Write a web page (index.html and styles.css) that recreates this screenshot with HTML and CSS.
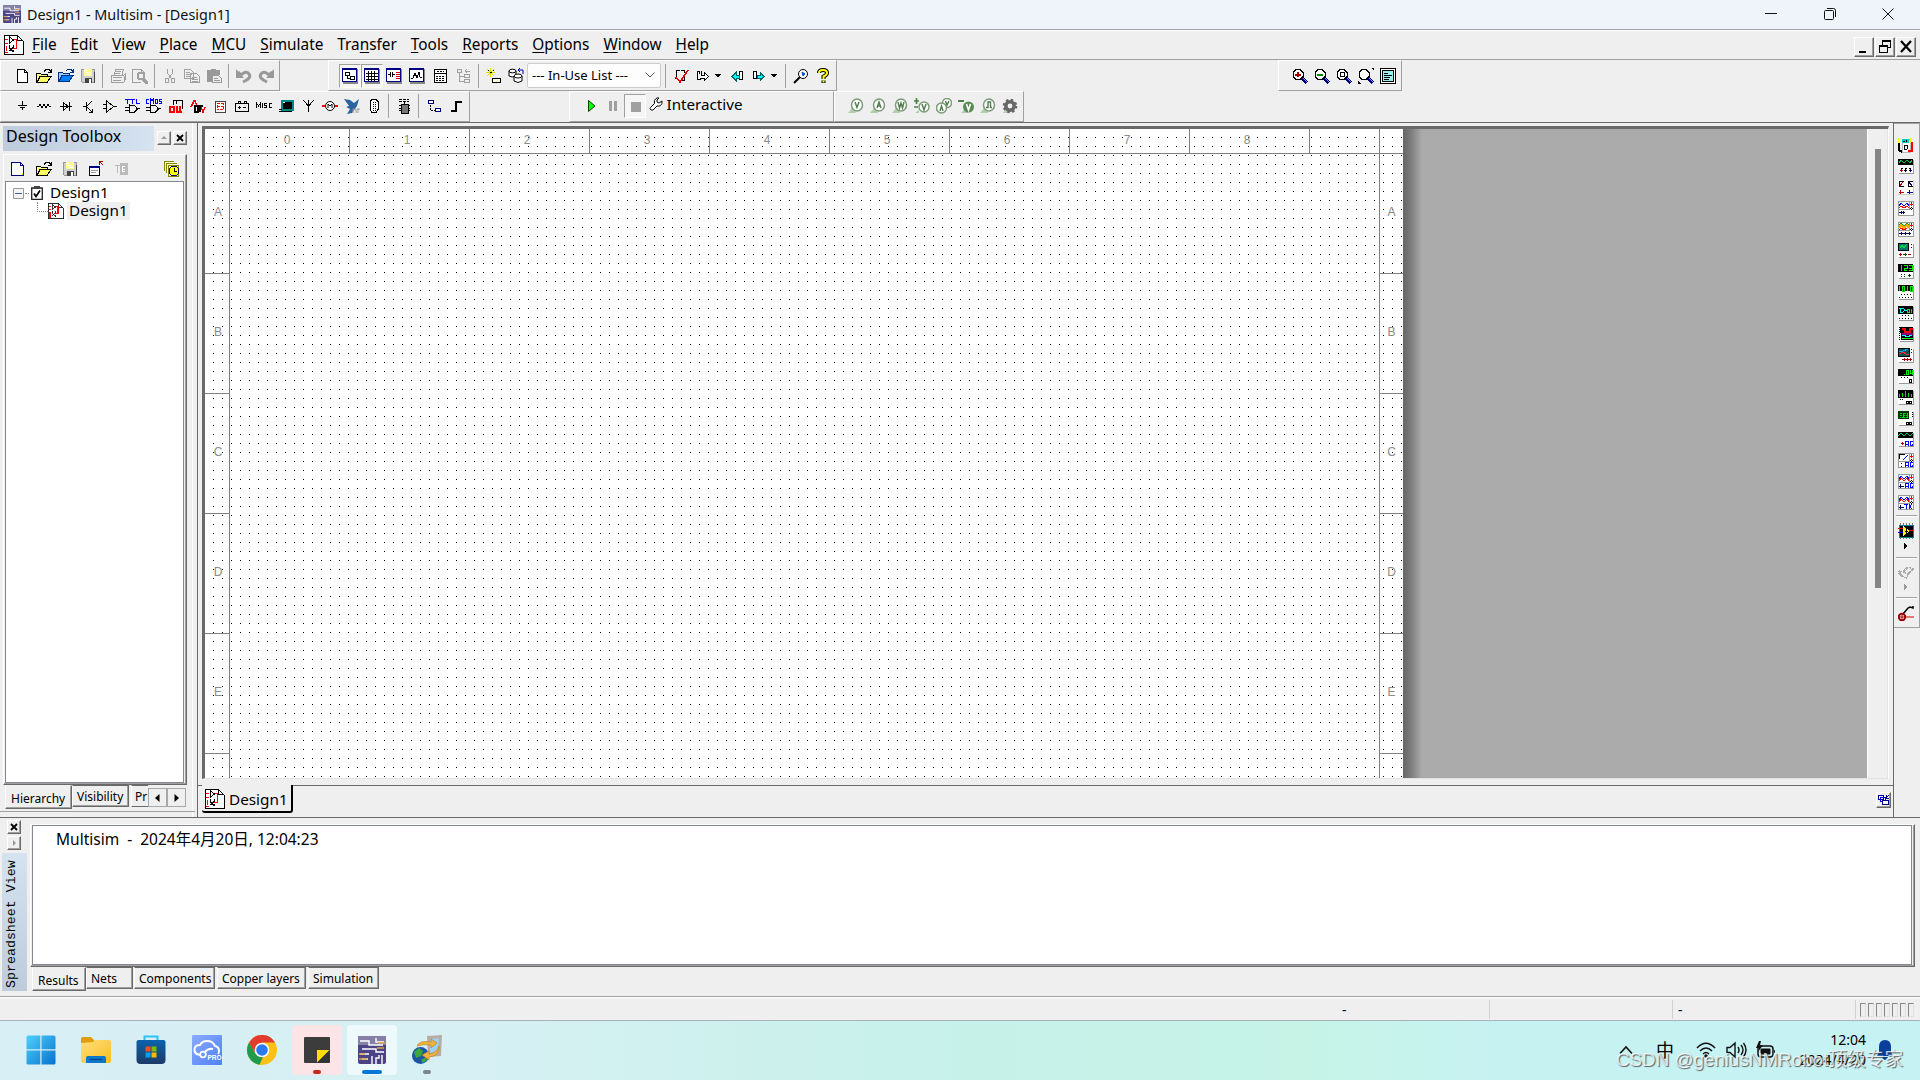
FILE: index.html
```html
<!DOCTYPE html>
<html lang="en">
<head>
  <meta charset="UTF-8" />
  <meta name="viewport" content="width=device-width, initial-scale=1.0"/>
  <title>Design1 - Multisim - [Design1]</title>
  <link rel="stylesheet" href="styles.css">
</head>
<body>

<!-- shared icons -->
<svg class="sprite">
  <symbol id="app" viewBox="0 0 28 28">
    <rect width="28" height="28" rx="2" fill="#4c4384"/>
    <rect y="0" width="28" height="9" fill="#8580a8"/>
    <path d="M2 5h9v4h8M18 2v4h8M4 13h14v3h8M18 9h7M2 18h9M4 23h6M14 28v-8M18 28v-6h3v-3M24 28v-9" fill="none" stroke="#fff" stroke-width="1.4"/>
    <path d="M20 7h7M19 12h7M1 18h6M1 23h8" stroke="#d8a44a" stroke-width="1.6"/>
  </symbol>
  <symbol id="schem" viewBox="0 0 20 20">
    <path d="M.5.5h13l6 6v13H.5z" fill="#fff" stroke="#000"/>
    <path d="M13.500.5v5h5" fill="none" stroke="#000"/>
    <path d="M1 4.500h3M1 8.500h3M2.500 11v5M1 17.500h3M10 4.500h2.500v9H9" fill="none" stroke="#f00" stroke-width="1.300"/>
    <path d="M5.500 2v6l4-3zM5.500 10v3l4 4M9.500 10v2l-4 4M9 15v2" fill="none" stroke="#000"/>
  </symbol>
  <symbol id="new" viewBox="0 0 16 16">
    <path d="M3.500 1.500h7l3 3v10h-10z" fill="#fff" stroke="#000"/>
    <path d="M10.500 1.500v3h3" fill="none" stroke="#000"/>
  </symbol>
  <symbol id="new2" viewBox="0 0 16 16">
    <path d="M2 2h9l3 3v10H2z" fill="#fff"/><path d="M9 15l5-5v5z" fill="#ff0"/>
    <path d="M1.500 1.500h9l3 3v10h-12zM10.500 1.500v3h3" fill="none" stroke="#000080"/>
  </symbol>
  <symbol id="open" viewBox="0 0 16 16">
    <path d="M.5 14V5.500h4l1 1h6V9" fill="#ffff80" stroke="#000"/>
    <path d="M1 14.500l3-6h11l-4 6z" fill="#ffff60" stroke="#000"/>
    <path d="M8 3.500l2-2h3l2 2M15.500 1v4M12 4.500h3" fill="none" stroke="#000"/>
  </symbol>
  <symbol id="openb" viewBox="0 0 16 16">
    <path d="M.5 13V4.500h4l1 1h6V8" fill="#9cf" stroke="#003080"/>
    <path d="M1 13.500l3-6h11l-4 6z" fill="#0080ff" stroke="#003080"/>
    <path d="M8 2.500l2-1h3l2 2M15.500 1v4M12 4.500h3" fill="none" stroke="#003080"/>
  </symbol>
  <symbol id="save" viewBox="0 0 16 16">
    <path d="M1.500 1.500h13v13h-12l-1-1z" fill="#d0d0d0" stroke="#999"/>
    <path d="M4 1h8v7H4z" fill="#ffff90"/><path d="M4 2.500h3M6 4.500h3M8 6.500h3" stroke="#fff"/>
    <path d="M5 10h7v5H5z" fill="#444"/><path d="M9 11h2v4H9z" fill="#fff"/><path d="M14.500 4v11" stroke="#444"/>
  </symbol>
  <symbol id="box" viewBox="0 0 16 16">
    <path d="M1 1h15v15H1z" fill="#888"/><path d="M.5.5h14v13H.5z" fill="#fff" stroke="#000080"/><path d="M0 0h15v2H0z" fill="#000080"/>
  </symbol>
  <symbol id="arrow-down" viewBox="0 0 7 4"><path d="M0 0h7L3.500 4z" fill="#000"/></symbol>
  <symbol id="lens" viewBox="0 0 16 16">
    <path d="M10 10l5 5" stroke="#000080" stroke-width="3"/><path d="M11 10l4 4" stroke="#88f"/>
    <path d="M4 1.500h4l3 3v4l-3 3H4l-3-3v-4z" fill="#fff" stroke="#000"/>
  </symbol>
  <symbol id="probe" viewBox="0 0 16 16">
    <path d="M0 15l5-6 3 6z" fill="#b2cfac"/><ellipse cx="9" cy="7" rx="5.500" ry="6" fill="#fff" stroke="#7d9b78" stroke-width="1.500"/>
  </symbol>
  <!-- instrument case: screen on top, terminals below -->
  <symbol id="inst" viewBox="0 0 16 16">
    <path d="M1 1h15v14H1z" fill="#999"/><path d="M0 0h15v14H0z" fill="#fff"/><path d="M0 0h15v6H0z" fill="#000"/>
  </symbol>
  <symbol id="inst2" viewBox="0 0 16 16">
    <path d="M0 0h16v15H0z" fill="#999"/><path d="M1 1h10v7H1zM12 1h3v13h-3zM1 9h14v5H1z" fill="#fff"/>
    <path d="M13.500 1v4M12 3h3" stroke="#f00"/><path d="M13 6h1v1h-1zM12 7h1v1h-1zM14 7h1v1h-1zM13 8h1v1h-1z" fill="#000"/>
  </symbol>
  <symbol id="pins" viewBox="0 0 16 6">
    <path d="M3 1h2M7 1h2M11 1h2" stroke="#000"/>
    <path d="M2 3.500h3M3.500 2v3" stroke="#a00000"/><path d="M6 3.500h3M7.500 2v3" stroke="#000"/><path d="M11 3.500h3M12.500 2v3" stroke="#000080"/>
  </symbol>
  <symbol id="ag" viewBox="0 0 16 16">
    <path d="M7.500 14V9.500h3V14M8 12.500h2M15 9.500h-2.500v4H14.500v-2" fill="none" stroke="#00f"/>
  </symbol>
</svg>

<div class="title-bar">
  <svg class="app-icon"><use href="#app"/></svg>
  <span class="title-text">Design1 - Multisim - [Design1]</span>
  <div class="window-buttons">
    <svg viewBox="0 0 12 12"><path d="M0 5.500h12" stroke="#111"/></svg>
    <svg viewBox="0 0 12 12" fill="none" stroke="#111"><rect x=".5" y="2.500" width="9" height="9" rx="1"/><path d="M3 .5h6.500q2 0 2 2V9"/></svg>
    <svg viewBox="0 0 12 12"><path d="M.5.5l11 11M11.500.5l-11 11" stroke="#111"/></svg>
  </div>
</div>

<div class="menu-bar">
  <svg class="schem-icon px"><use href="#schem"/></svg>
  <div class="menus">
    <span><u>F</u>ile</span><span><u>E</u>dit</span><span><u>V</u>iew</span><span><u>P</u>lace</span><span><u>M</u>CU</span><span><u>S</u>imulate</span><span>Tra<u>n</u>sfer</span><span><u>T</u>ools</span><span><u>R</u>eports</span><span><u>O</u>ptions</span><span><u>W</u>indow</span><span><u>H</u>elp</span>
  </div>
  <div class="mdi-buttons px">
    <b><svg viewBox="0 0 14 14"><path d="M2 12h7" stroke="#000" stroke-width="2"/></svg></b>
    <b><svg viewBox="0 0 14 14" fill="none" stroke="#000"><path d="M4 1h9M1 6h9" stroke-width="2"/><path d="M4.500 5V1.500h8v6H10M1.500 6v6.500h8V6"/></svg></b>
    <b><svg viewBox="0 0 14 14" class="smooth"><path d="M2 1l10 11M12 1L2 12" stroke="#000" stroke-width="2.200"/></svg></b>
  </div>
</div>

<div class="toolbar-row px">
  <div class="toolbar t-standard">
    <i><svg><use href="#new"/></svg></i>
    <i><svg><use href="#open"/></svg></i>
    <i><svg><use href="#openb"/></svg></i>
    <i><svg><use href="#save"/></svg></i>
    <hr>
    <i><svg viewBox="0 0 16 16" fill="none" stroke="#a0a0a0"><path d="M4.500 7l1-5.500h8L12 7M1.500 7.500h12l2-2v6l-2 3h-12zM6 3.500h5M5 5.500h5M3 9.500h9M3 12.500h8M14 8v5"/></svg></i>
    <i><svg viewBox="0 0 16 16" fill="none" stroke="#a0a0a0"><path d="M9 14.500H.5V1.500h9l3 3v3M9.500 1v4"/><circle cx="9" cy="8" r="3.500" stroke-width="2"/><path d="M11 11l5 5" stroke-width="3"/></svg></i>
    <hr>
    <i><svg viewBox="0 0 16 16" fill="none" stroke="#a0a0a0"><path d="M5.500 1v4l4 6M10.500 1v4l-4 6"/><rect x="3.500" y="10.500" width="3" height="4"/><rect x="9.500" y="10.500" width="3" height="4"/></svg></i>
    <i><svg viewBox="0 0 16 16" fill="none" stroke="#a0a0a0"><path d="M.5 1.500h6l3 3v6h-9zM2 4.500h4M2 6.500h6M2 8.500h4M6.500 5.500h6l3 3v6h-9zM8 9.500h5M8 11.500h6M8 13h6"/></svg></i>
    <i><svg viewBox="0 0 16 16"><path d="M1 2h4V1h5v1h4v5h-6v7H1z" fill="#999"/><path d="M6.500 7.500h6l3 3v4h-9z" fill="#eee" stroke="#999"/><path d="M8 10.500h4M8 12.500h6" stroke="#999"/></svg></i>
    <hr>
    <i><svg viewBox="0 0 16 16" class="smooth"><path d="M2 4l3 3q5-5 8-1 3 4-6 8" fill="none" stroke="#999" stroke-width="3"/><path d="M0 1v9h8z" fill="#999"/></svg></i>
    <i><svg viewBox="0 0 16 16" class="smooth"><path d="M14 4l-3 3Q6 2 3 6q-3 4 6 8" fill="none" stroke="#999" stroke-width="3"/><path d="M16 1v9H8z" fill="#999"/></svg></i>
  </div>

  <div class="toolbar t-main">
    <i class="pressed"><svg><use href="#box"/><path d="M3.500 4.500h4v3h-4zM5.500 8v2.500h3M8.500 8.500h4v3h-4z" fill="none" stroke="#000"/></svg></i>
    <i class="pressed"><svg><use href="#box"/><path d="M2 5.500h12M2 8.500h12M2 11.500h12M4.500 3v10M7.500 3v10M10.500 3v10" stroke="#000"/></svg></i>
    <i><svg><use href="#box"/><path d="M2 6.500h2M4.500 4v5M6.500 4v5M7 6.500h2" stroke="#000"/><path d="M10 4.500h4M10 6.500h4M10 8.500h4M10 10.500h4" stroke="#c00"/></svg></i>
    <i class="wide"><svg><use href="#box"/><path d="M2 10h2l2-5 2 5 2-6 1 5h2" fill="none" stroke="#000"/></svg></i>
    <i class="wide"><svg viewBox="0 0 16 16"><path d="M1.500 1.500h12v13h-12z" fill="#fff" stroke="#000"/><path d="M2 5.500h11" stroke="#000"/><path d="M4 3.500h7M3 8h2M6 8h2M9 8h3M3 10h2M6 10h2M9 10h3M3 12.500h2M6 12.500h2M9 12.500h3" stroke="#000" stroke-dasharray="2 1"/></svg></i>
    <i><svg viewBox="0 0 16 16" fill="none" stroke="#a0a0a0"><path d="M1.500 1.500h4v3h-4zM3.500 5v8.500h4M4 8.500h4M8.500 6.500h5v3h-5zM8.500 11.500h5v3h-5zM9 3.500h5M11 1l-2 2 2 2"/></svg></i>
    <hr>
    <i><svg viewBox="0 0 16 16"><path d="M4.500 0v9M0 4.500h9M1 1l7 7M8 1L1 8" stroke="#dd0"/><path d="M4 4h2M2 2h1M7 2h1" stroke="#000"/><path d="M6.500 10.500h8v4h-8z" fill="#ffd" stroke="#000"/></svg></i>
    <i><svg viewBox="0 0 16 16" class="smooth"><g fill="#fff" stroke="#000"><path d="M1 3v5q3 2 7 0V3"/><ellipse cx="4.500" cy="3" rx="3.500" ry="1.800"/><path d="M6 8v5q4 3 8 0V8"/><ellipse cx="10" cy="8" rx="4" ry="2"/></g><path d="M15 6V2h-5M12 0l-2 2 2 2" fill="none" stroke="#00a"/></svg></i>
    <div class="select">--- In-Use List ---<svg viewBox="0 0 10 6" class="smooth"><path d="M.5.5L5 5 9.500.5" fill="none" stroke="#555"/></svg></div>
    <hr>
    <i><svg viewBox="0 0 16 16"><path d="M3.500 9V2.500h3M8 2.500h3.500V5M2 10.500h3M11.500 9v3H9" fill="none" stroke="#000"/><path d="M3 9l4 5 8-12" fill="none" stroke="#e00" stroke-width="1.500"/></svg></i>
    <i><svg viewBox="0 0 16 16"><path d="M2.500 11V3.500h2v2M6.500 3v4.500h3v-3l4 4-4 4v-2h-5M2 11.500h4" fill="#fff" stroke="#000"/></svg></i>
    <svg class="drop"><use href="#arrow-down"/></svg>
    <i><svg viewBox="0 0 16 16"><path d="M10.500 3.500h3v8h-3z" fill="#fff" stroke="#000"/><path d="M10 7.500H7v-3l-4 4 4 4v-2h3z" fill="#0ff" stroke="#066"/></svg></i>
    <i><svg viewBox="0 0 16 16"><path d="M2.500 3.500h3v7h-3z" fill="#fff" stroke="#000"/><path d="M6 7.500h3v-3l4 4-4 4v-2H6z" fill="#0ff" stroke="#066"/></svg></i>
    <svg class="drop"><use href="#arrow-down"/></svg>
    <hr>
    <i><svg viewBox="0 0 16 16" class="smooth"><path d="M1 15l6-6" stroke="#000" stroke-width="2"/><circle cx="10" cy="6" r="4.500" fill="#fff" stroke="#000"/><path d="M9 4l3 2-2 2z" fill="#05c" stroke="#05c"/></svg></i>
    <i><svg viewBox="0 0 16 16" class="smooth"><path d="M4 5q0-3 4-3t4 3q0 2-3.500 3.500V11M8.500 12.500v2.500" fill="none" stroke="#000" stroke-width="4"/><path d="M4 5q0-3 4-3t4 3q0 2-3.500 3.500V11M8.500 12.500v2" fill="none" stroke="#ff0" stroke-width="2"/></svg></i>
  </div>

  <div class="toolbar t-zoom">
    <i><svg><use href="#lens"/><path d="M3 6.500h6M6 4v5" stroke="#900" stroke-width="2"/></svg></i>
    <i><svg><use href="#lens"/><path d="M3 6.500h6" stroke="#080" stroke-width="2"/></svg></i>
    <i><svg><use href="#lens"/><path d="M4 4.500h4v4H4z" fill="none" stroke="#000"/></svg></i>
    <i><svg><use href="#lens"/><path d="M13 0h3v3zM0 13v3h3z" fill="#000"/></svg></i>
    <i><svg viewBox="0 0 16 16"><path d="M.5.5h15v15H.5z" fill="#fff" stroke="#000"/><path d="M2.500 2.500h11v11h-11z" fill="#9ee" stroke="#000"/><path d="M4 5.500h4M4 7.500h8M4 9.500h6M4 11.500h5" stroke="#000"/></svg></i>
  </div>
</div>

<div class="toolbar-row second px">
  <div class="toolbar t-parts">
    <i><svg viewBox="0 0 16 16" stroke="#000" fill="none"><path d="M8.500 3v4M4 7.500h9M6 9.500h5M8.500 10v2"/></svg></i>
    <i><svg viewBox="0 0 16 16" stroke="#000" fill="none"><path d="M1 8h2l1-2 2 4 2-4 2 4 2-4 1 2h2"/></svg></i>
    <i><svg viewBox="0 0 16 16" stroke="#000" fill="none"><path d="M2 8.500h12M5.500 5v7l5-3.500zM11.500 4v9"/></svg></i>
    <i><svg viewBox="0 0 16 16" stroke="#000" fill="none"><path d="M3 8.500h4M6.500 4v9M7 8l5-5M7 9l5 5M12 11v3H9"/></svg></i>
    <i><svg viewBox="0 0 16 16" stroke="#000" fill="none"><path d="M4.500 3v11L12 8.500zM1 6.500h3M1 10.500h3M12 8.500h3"/></svg></i>
    <i><svg viewBox="0 0 16 16" stroke="#000" fill="none"><path d="M1 1.500h5M3.500 1v5M6 1.500h5M8.500 1v5M12.500 1v4.500h3" stroke="#00f"/><path d="M5.500 7v7h5l3-3-3-3.500zM1 9.500h4M1 12.500h4M13 10.500h3"/></svg></i>
    <i><svg viewBox="0 0 16 16" stroke="#000" fill="none"><path d="M3 1.500H.5v4H3M4.500 6V1l1.500 2 1.500-2v5M9.500 1.500h2v4h-2zM16 1.500h-2.500v2h2v2H13" stroke="#00f"/><path d="M4.500 7v7h5l3-3-3-3.500zM0 9.500h4M0 12.500h4M12 10.500h3"/></svg></i>
    <i><svg viewBox="0 0 16 16" fill="none"><path d="M5.500 7V2.500h3M8.500 6V2.500H14V11" stroke="#000"/><path d="M2 9h4v5H2zM9 8v6h3V8M12 14h2" stroke="#f00" stroke-width="1.800"/></svg></i>
    <i><svg viewBox="0 0 16 16" fill="none"><path d="M1 9l3-6h1l4 9M11 9l2 5 2-5" stroke="#f00" stroke-width="1.500"/><path d="M5 8h3v6H5zM10 14V8h3" stroke="#000" stroke-width="1.600"/></svg></i>
    <i><svg viewBox="0 0 16 16"><path d="M3 3h10v11H3z" fill="#fff" stroke="#444"/><path d="M5 5.500h6v6H5zM5 8.500h6" fill="none" stroke="#f00" stroke-dasharray="3 1"/></svg></i>
    <i><svg viewBox="0 0 16 16"><path d="M1.500 5.500h13v8h-13zM4.500 5V3.500h2V5M10.500 5V3.500h2V5M4 9.500h3M9 9.500h3M5.500 8v3" fill="none" stroke="#000"/></svg></i>
    <i><svg viewBox="0 0 16 16"><path d="M.5 10V5l2 3 2-3v5M6.500 5v5M11 5.500H8.500v2h2v2H8M16 5.500h-3v4h3" fill="none" stroke="#000"/></svg></i>
    <i><svg viewBox="0 0 16 16"><path d="M3 2h13v11H3z" fill="#088"/><path d="M5 4h9v7H5z" fill="#000"/><path d="M1 13h13M1 11h3" stroke="#000"/><path d="M5 4h2v1H5z" fill="#fff"/></svg></i>
    <i><svg viewBox="0 0 16 16"><path d="M3 2l5.500 6L14 2M8.500 2v12" fill="none" stroke="#000"/></svg></i>
    <i><svg viewBox="0 0 16 16" class="smooth"><path d="M0 8h3M13 8h3" stroke="#f00" stroke-width="2"/><circle cx="8" cy="8" r="4.500" fill="#fff" stroke="#000"/><path d="M6 10V6l2 2 2-2v4" fill="none" stroke="#000"/></svg></i>
    <i><svg viewBox="0 0 16 16" class="smooth"><path d="M0 1l6 1 4 3 5-4-2 7-5 7-5 1 3-5-4-2 3-1z" fill="#2a64a0"/><path d="M9 15v-4h3v4M13 11h3M14 15v-4" stroke="#999" fill="none"/></svg></i>
    <i><svg viewBox="0 0 16 16"><path d="M6 1.500h4l2 2v8l-2 3H6l-2-3v-8z" fill="#fff" stroke="#000"/><path d="M7 4v9M9.500 4v9" stroke="#000" stroke-dasharray="1 1"/></svg></i>
    <hr>
    <i><svg viewBox="0 0 16 16"><path d="M3 1.500h10M3 3.500h10" stroke="#000" stroke-dasharray="3 1"/><path d="M5 6h7v9H5z" fill="#777" stroke="#000"/><path d="M3 7.500h2M3 10h2M3 12.500h2M12 7.500h2M12 10h2M12 12.500h2M8 4v2" stroke="#000"/></svg></i>
    <hr>
    <i><svg viewBox="0 0 16 16"><path d="M2.500 2.500h5v3h-5zM9.500 10.500h5v3h-5z" fill="#fff" stroke="#000080"/><path d="M2 2h6v1H2zM9 10h6v1H9z" fill="#000080"/><path d="M4.500 7v5.500H9" fill="none" stroke="#000" stroke-dasharray="2 1"/></svg></i>
    <i><svg viewBox="0 0 16 16"><path d="M3 13h5V4h6" fill="none" stroke="#000" stroke-width="2"/></svg></i>
  </div>

  <div class="toolbar t-sim">
    <i><svg viewBox="0 0 16 16" class="smooth"><path d="M5.500 2.500v11L12 8z" fill="#0f0" stroke="#040"/></svg></i>
    <i><svg viewBox="0 0 16 16"><path d="M4 3h3v10H4zM9 3h3v10H9z" fill="#a0a0a0"/></svg></i>
    <i class="pressed"><svg viewBox="0 0 16 16"><path d="M4 4h10v10H4z" fill="#a0a0a0"/></svg></i>
    <span class="sim-mode"><svg viewBox="0 0 14 14" class="smooth"><path d="M1.500 12.500q-1-1 0-2l4-4Q4.500 3 7 1.500q1.500-1 3-.5L8 3v2l2 1 3-2q.5 3-1.500 4.500-1.500 1-3.500.5l-4 4q-1 .5-2.500-.5z" fill="#fff" stroke="#000"/></svg>Interactive</span>
  </div>

  <div class="toolbar t-probe">
    <i><svg class="smooth"><use href="#probe"/><path d="M7 4l2 5.500L11 4" class="pl"/></svg></i>
    <i><svg class="smooth"><use href="#probe"/><path d="M7 10l2-6 2 6M8 8h2" class="pl"/></svg></i>
    <i><svg class="smooth"><use href="#probe"/><path d="M6 4l1.500 6L9 5l1.500 5L12 4" class="pl"/></svg></i>
    <i><svg class="smooth" viewBox="0 0 16 16"><path d="M0 3h5M2.500 0v6M0 9h4" stroke="#4e7d49" stroke-width="1.600"/><circle cx="10" cy="9" r="5" fill="#fff" stroke="#7d9b78" stroke-width="1.500"/><path d="M8 6l2 6 2-6" class="pl"/><path d="M1 15l4-3v3z" fill="#b2cfac"/></svg></i>
    <i><svg class="smooth" viewBox="0 0 16 16"><g fill="#fff" stroke="#7d9b78" stroke-width="1.500"><circle cx="11" cy="5" r="4.500"/><circle cx="5.500" cy="10" r="5"/></g><path d="M9.500 3L11 7l2-4M4 13l1.500-5L7 13" class="pl"/></svg></i>
    <i><svg class="smooth" viewBox="0 0 16 16"><path d="M0 3h6" stroke="#4e7d49" stroke-width="2"/><path d="M3 15l5-5 2 5z" fill="#b2cfac"/><circle cx="10.500" cy="9" r="5.500" fill="#5c8a57"/><path d="M8.500 6l2 6 2-6" fill="none" stroke="#fff" stroke-width="1.600"/></svg></i>
    <i><svg class="smooth"><use href="#probe"/><path d="M6 9.500h2V4h2.500v5.500H12" class="pl"/></svg></i>
    <i><svg class="smooth" viewBox="0 0 16 16"><path d="M1 15l4-5 2 5z" fill="#b2cfac"/><circle cx="8" cy="8" r="4.200" fill="none" stroke="#666" stroke-width="3.500"/><circle cx="8" cy="8" r="6.300" fill="none" stroke="#666" stroke-width="2" stroke-dasharray="2.500 2.450"/></svg></i>
  </div>
</div>

<div class="workspace">
  <div class="toolbox">
    <div class="toolbox-head">
      <h2>Design Toolbox</h2>
      <b class="mini"><svg viewBox="0 0 8 8"><path d="M1 5l3-3 3 3z" fill="#999"/></svg></b>
      <b class="mini"><svg viewBox="0 0 8 8" class="smooth"><path d="M1 1l6 6M7 1L1 7" stroke="#000" stroke-width="1.800"/></svg></b>
    </div>
    <div class="toolbox-body">
      <div class="toolbox-tools px">
        <svg><use href="#new2"/></svg>
        <svg><use href="#open"/></svg>
        <svg><use href="#save"/></svg>
        <svg viewBox="0 0 16 16"><path d="M1.500 5.500h10v9h-10z" fill="#fff" stroke="#000"/><path d="M1 5h11v2H1z" fill="#000080"/><path d="M3 9.500h7M3 11.500h5" stroke="#999"/><path d="M15 4l-3-3M11 4V.5h4" stroke="#900" fill="none"/></svg>
        <svg viewBox="0 0 16 16"><path d="M1 4.500h5M3.500 4v8" stroke="#bbb"/><path d="M6 2h8v12H6z" fill="#bbb"/><path d="M11 5.500H8v5h3M8 8h3" stroke="#fff" fill="none"/></svg>
        <svg viewBox="0 0 16 16" class="last"><path d="M.5 10V.5h9M2.500 12V2.500h10M4.500 14V4.500h10V15h-10z" fill="#ffc" stroke="#880"/><circle cx="10" cy="10" r="5" fill="#ff0" stroke="#000080"/><path d="M10 7v3.500h3" fill="none" stroke="#000"/></svg>
      </div>
      <div class="tree">
        <div class="node">
          <svg class="expander" viewBox="0 0 11 11"><path d="M.5.5h10v10H.5z" fill="#f4f4f4" stroke="#999"/><path d="M2 5.500h7" stroke="#36a"/></svg>
          <span class="dots"></span>
          <svg class="clip" viewBox="0 0 12 14"><path d="M.7 2h10.600v11.300H.7z" fill="#fff" stroke="#222" stroke-width="1.300"/><path d="M3 0h6v3H3z" fill="#444"/><path d="M3 7.500l2 3 4-6" fill="none" stroke="#000" stroke-width="1.700"/></svg>
          <span class="label">Design1</span>
        </div>
        <div class="node child">
          <span class="elbow"></span>
          <svg class="schem px"><use href="#schem"/></svg>
          <span class="label active">Design1</span>
        </div>
      </div>
    </div>
    <div class="toolbox-tabs">
      <span class="tab on">Hierarchy</span><span class="tab">Visibility</span><span class="tab cut">Pr</span>
      <b class="spin"><svg viewBox="0 0 5 8"><path d="M4.500 0v8L0 4z"/></svg></b><b class="spin"><svg viewBox="0 0 5 8"><path d="M.5 0v8L5 4z"/></svg></b>
    </div>
  </div>

  <div class="editor">
    <div class="canvas">
      <div class="sheet">
        <div class="ruler-top"><span class="corner"></span><span>0</span><span>1</span><span>2</span><span>3</span><span>4</span><span>5</span><span>6</span><span>7</span><span>8</span><span class="rest"></span><span class="end"></span></div>
        <div class="sheet-body">
          <div class="ruler-side"><span>A</span><span>B</span><span>C</span><span>D</span><span>E</span><span></span></div>
          <div class="ruler-side right"><span>A</span><span>B</span><span>C</span><span>D</span><span>E</span><span></span></div>
        </div>
      </div>
      <div class="void"></div>
      <div class="scroll"><div class="thumb"></div></div>
    </div>
    <div class="doc-tabs">
      <div class="doc-tab"><svg class="schem-icon px"><use href="#schem"/></svg>Design1</div>
      <b class="cascade px"><svg viewBox="0 0 12 12" fill="none"><path d="M.5 1.500h5v4h-5z" stroke="#000080"/><path d="M2.500 3.500h5v4h-5z" stroke="#00f"/><path d="M4.500 6.500h6v4h-6z" fill="#fff" stroke="#000080"/><path d="M4 6h7v1H4z" fill="#000080"/><path d="M8 4l3-3M8 1v3h3" stroke="#000080"/></svg></b>
    </div>
  </div>

  <div class="instruments px">
    <div class="inst-list">
      <svg viewBox="0 0 16 16"><path d="M4 1h8v13H4z" fill="#fff" stroke="#bbb"/><path d="M4 1h7v4H4z" fill="#0cc"/><path d="M5 3h2M8 2v2" stroke="#000"/><path d="M6 7h3l1 2-1 2H6z" fill="none" stroke="#000"/><path d="M1 0v5M13 0v5" stroke="#ff0" stroke-width="2"/><path d="M1 5v7l3 2" fill="none" stroke="#000" stroke-width="2"/><path d="M14 4v9h-4" fill="none" stroke="#f00" stroke-width="2"/></svg>
      <svg><use href="#inst"/><path d="M1 4l2-3 3 3 3-3 3 3 2-3" fill="none" stroke="#0c4"/><use href="#pins" y="8" width="16" height="6"/></svg>
      <svg viewBox="0 0 16 16"><path d="M0 0h16v15H0z" fill="#ccc"/><path d="M0 0h15v14H0z" fill="#fff"/><path d="M1.500 6V1.500H6M10.500 6V1.500H15M1 6.500h5M10 6.500h5" fill="none" stroke="#000"/><path d="M2 6l3-4M1 12h5M2.500 10v4" stroke="#c00"/><path d="M11 2l3 4M9 12h6M11.500 10v4" stroke="#00a"/></svg>
      <svg><use href="#inst2"/><path d="M1 5l2-3 3 3 3-3 2 3" fill="none" stroke="#00f"/><path d="M1 7l2-2 3 2 3-2 2 2" fill="none" stroke="#f00"/><path d="M1 11.500h6M3 10v3M5.500 10v3" stroke="#000080"/></svg>
      <svg><use href="#inst2"/><path d="M1 4l2-3 3 3 3-3 2 3" fill="none" stroke="#0a0"/><path d="M1 6l2-3 3 3 3-3 2 3" fill="none" stroke="#fa0" stroke-width="2"/><path d="M1 8l2-2 3 2 3-2" fill="none" stroke="#f00"/><path d="M1 11.500h12M3 10v3M7 10v3M11 10v3" stroke="#000060"/></svg>
      <svg><use href="#inst"/><path d="M0 0h11v8H0z" fill="#000"/><path d="M1 1h9v6H1z" fill="#077"/><path d="M11 0h4v7h-4z" fill="#fff"/><path d="M2 5l2-3 2 3 3-4" stroke="#0d4" fill="none"/><path d="M13 1v5" stroke="#000" stroke-dasharray="1 2"/><path d="M1 11.500h3M10 11.500h3M2.500 10v3" stroke="#a00"/><path d="M5 11.500h4M7.500 10v3" stroke="#050"/></svg>
      <svg><use href="#inst"/><path d="M0 5h15v3H0z" fill="#000"/><path d="M3.500 1v6M6 1.500h3v2.500H6.500v2.500H9M11 1.500h3v5h-3M11 4h3" fill="none" stroke="#0e0"/><path d="M3 10.500h1M6 10.500h1M3 12.500h1M6 12.500h1M10 11.500h3M11.500 10v3" stroke="#040"/></svg>
      <svg><use href="#inst"/><path d="M1.500 1v5M4 1v5h2.500V1H4M9.500 1v5M12 1v5h2V1z" fill="none" stroke="#0e0"/><path d="M3 9.500h10M1 12.500h14" stroke="#000" stroke-dasharray="1 2"/></svg>
      <svg><use href="#inst"/><path d="M0 5h15v3H0z" fill="#000"/><path d="M1 2h4l2 2-2 2H2V2M7 4h2" fill="none" stroke="#0ff"/><path d="M9.500 3.500h2v3h-2zM13.500 3v4" fill="none" stroke="#0e0"/><path d="M4 9.500h8M1 12.500h14" stroke="#000" stroke-dasharray="1 2"/></svg>
      <svg><use href="#inst"/><path d="M0 0h2v15H0z" fill="#fff"/><path d="M3 0h12v13H3z" fill="#000"/><path d="M1 0v14" stroke="#000" stroke-dasharray="1 1"/><path d="M4 2h3v3h5V2h3" stroke="#f00" stroke-width="2" fill="none"/><path d="M4 7h11" stroke="#808" stroke-width="2"/><path d="M4 8.500h3v1h4v-1h3" stroke="#0ff" fill="none"/><path d="M4 11.500h11" stroke="#0f0"/></svg>
      <svg><use href="#inst"/><path d="M0 0h12v9H0z" fill="#000"/><path d="M1 1h10v7H1z" fill="#055"/><path d="M12 0h3v8h-3z" fill="#fff"/><path d="M1 3h4l5-2" stroke="#0af" fill="none"/><path d="M1 6l4-2 3 2h3" stroke="#f22" fill="none"/><path d="M13 1v6" stroke="#000" stroke-dasharray="1 2"/><path d="M4 11.500h10M6 10v3M9 10v3M12 10v3" stroke="#a00"/></svg>
      <svg><use href="#inst"/><path d="M0 5h15v2H0z" fill="#000"/><path d="M6 5.500h1M8.500 1.500h2v4h-2zM12.500 1v3h3M14.500 1v5" fill="none" stroke="#0e0"/><path d="M3 8.500h8" stroke="#000" stroke-dasharray="1 2"/><path d="M11 10h2v3h-2z" fill="none" stroke="#000"/></svg>
      <svg><use href="#inst"/><path d="M0 5h15v3H0z" fill="#000"/><path d="M1.500 7V4M4.500 7V3M7.500 7V1M10.500 7V3M13.500 7V4" stroke="#0d0" stroke-width="1.500"/><path d="M2 9.500h4" stroke="#000" stroke-dasharray="1 1"/><path d="M8 11h2v2H8zM11 11h2v2h-2z" fill="none" stroke="#000"/></svg>
      <svg><use href="#inst"/><path d="M11 0h4v8h-4z" fill="#fff"/><path d="M0 0h11v8H0z" fill="#030"/><path d="M2 2h3v4H2M6 2h3v4H6M2 4h8" fill="none" stroke="#0d0" stroke-dasharray="2 1"/><path d="M14 1v6" stroke="#000" stroke-dasharray="1 1"/><path d="M8 11h2v2H8zM11 11h2v2h-2z" fill="none" stroke="#000"/></svg>
      <svg><use href="#inst"/><path d="M0 4l3-3 3 3 3-3 3 3 3-3" fill="none" stroke="#0c6"/><path d="M3 11.500h3M4.500 10v3" stroke="#a00"/><use href="#ag"/></svg>
      <svg><use href="#inst2"/><path d="M1 6V1h6M5 7l5-5" fill="none" stroke="#000"/><path d="M5 7l5-5" stroke="#00f"/><path d="M3 10v4" stroke="#000" stroke-dasharray="1 2"/><use href="#ag"/></svg>
      <svg><use href="#inst2"/><path d="M1 5l2-3 3 3 3-3 2 3" fill="none" stroke="#00f"/><path d="M1 7l2-3 3 3 3-3 2 3" fill="none" stroke="#f00"/><path d="M1 12h5M2.500 10v4" stroke="#000060"/><use href="#ag"/></svg>
      <svg><use href="#inst2"/><path d="M1 5l2-3 3 3 3-3 2 3" fill="none" stroke="#00f"/><path d="M1 7l2-3 3 3 3-3 2 3" fill="none" stroke="#f00"/><path d="M1 12h5M2.500 10v4" stroke="#000060"/><path d="M6 9.500h4M8 9v5M11.500 9v5M14 9l-2 2.500 2 2.500" fill="none" stroke="#00f"/></svg>
    </div>
    <hr>
    <svg viewBox="0 0 16 16"><path d="M2 0v16M5 0v16M8 0v16M11 0v16M14 0v16" stroke="#777"/><path d="M1 2h14v12H1z" fill="#000" stroke="#088"/><path d="M5 3v10l7-5z" fill="#ff0"/><path d="M0 5.500h5M11 7.500h5" stroke="#f00"/><path d="M0 9.500h5" stroke="#00f"/><path d="M7 8h3M8.500 6v4" stroke="#000"/></svg>
    <svg class="more" viewBox="0 0 4 6"><path d="M0 0v6l4-3z"/></svg>
    <hr>
    <svg viewBox="0 0 16 16"><path d="M1 6l4 1 5-5 5 2-5 5-1 4-4-1zM5 7l5 2M1 8l4 4" fill="none" stroke="#aaa" stroke-width="1.500" stroke-dasharray="3 1"/></svg>
    <svg class="more off" viewBox="0 0 4 6"><path d="M0 0v6l4-3z"/></svg>
    <hr>
    <svg viewBox="0 0 16 16" class="smooth"><path d="M5 9l5-6 2-1 3 1V1" fill="none" stroke="#000" stroke-width="1.500"/><path d="M7 12h9" stroke="#d00"/><circle cx="4" cy="12" r="3.200" fill="#fff" stroke="#900" stroke-width="2"/><path d="M4 10v4M2 12h4" stroke="#900"/></svg>
  </div>
</div>

<div class="spreadsheet">
  <div class="side">
    <b class="mini"><svg viewBox="0 0 8 8" class="smooth"><path d="M1 1l6 6M7 1L1 7" stroke="#000" stroke-width="1.800"/></svg></b>
    <b class="mini"><svg viewBox="0 0 8 8"><path d="M3 1v6l3-3z" fill="#999"/></svg></b>
    <div class="side-title"><span>Spreadsheet View</span></div>
  </div>
  <div class="results">
    <div class="log"><div class="log-box">Multisim&nbsp; -&nbsp; 2024年4月20日, 12:04:23</div></div>
    <div class="result-tabs"><span class="tab on">Results</span><span class="tab">Nets</span><span class="tab">Components</span><span class="tab">Copper layers</span><span class="tab">Simulation</span></div>
  </div>
</div>

<div class="status-bar">
  <span class="s1">-</span><span class="s2"></span><span class="s3">-</span>
  <span class="leds"><i></i><i></i><i></i><i></i><i></i><i></i><i></i></span>
</div>

<div class="taskbar">
  <div class="apps">
    <div class="app"><svg viewBox="0 0 30 30"><defs><linearGradient id="wg" x1="0" y1="0" x2="1" y2="1"><stop offset="0" stop-color="#4fd0fc"/><stop offset="1" stop-color="#0672cf"/></linearGradient></defs><path d="M.5 2Q.5.500 2 .500h12.300v13.800H.5zM15.500.500H28q1.500 0 1.500 1.500v12.300h-14zM.5 15.500h13.800v14H2q-1.500 0-1.500-1.500zM15.500 15.500h14V28q0 1.500-1.500 1.500H15.500z" fill="url(#wg)"/></svg></div>
    <div class="app"><svg viewBox="0 0 30 30"><defs><linearGradient id="fg" x2="1" y2="1"><stop stop-color="#ffe07a"/><stop offset="1" stop-color="#f9bd22"/></linearGradient></defs><path d="M0 4q0-2 2-2h8l3 3v6H0z" fill="#e09f0a"/><path d="M0 8l12-1 2-2h14q2 0 2 2v19q0 2-2 2H2q-2 0-2-2z" fill="url(#fg)"/><path d="M5 28v-5q0-2 2-2h16q2 0 2 2v5z" fill="#0a78c8"/><path d="M8.500 24.500h13" stroke="#054a86" stroke-width="1.200"/></svg></div>
    <div class="app"><svg viewBox="0 0 30 30"><defs><linearGradient id="sg" x2="0" y2="1"><stop stop-color="#0b63ac"/><stop offset="1" stop-color="#1c3a66"/></linearGradient></defs><path d="M8.500 6V1.500h13V6" fill="none" stroke="#2cc3f3" stroke-width="2"/><path d="M.5 7q0-2 2-2h25q2 0 2 2v18q0 4-4 4h-21q-4 0-4-4z" fill="url(#sg)"/><path d="M9.500 11.500h5v5h-5z" fill="#f25022"/><path d="M15.500 11.500h5v5h-5z" fill="#7fba00"/><path d="M9.500 17.500h5v5h-5z" fill="#00a4ef"/><path d="M15.500 17.500h5v5h-5z" fill="#ffb900"/></svg></div>
    <div class="app"><svg viewBox="0 0 30 30"><defs><linearGradient id="cg" x2="1" y2="1"><stop stop-color="#8aabfb"/><stop offset="1" stop-color="#4f80f8"/></linearGradient></defs><rect width="30" height="30" rx="1" fill="url(#cg)"/><path d="M8 20Q2 19 2.500 14 3 10 8 10q2-4 7-4 6 0 8 5 4 1 4 5 0 2-1 3M13 17q3-4 8-3" fill="none" stroke="#fff" stroke-width="2"/><circle cx="11" cy="19.500" r="2.800" fill="none" stroke="#fff" stroke-width="1.800"/><text x="15.500" y="25" class="pro">PRO</text></svg></div>
    <div class="app"><svg viewBox="0 0 30 30"><circle cx="15" cy="15" r="15" fill="#fbc116"/><path d="M2 7.500L8.500 18.800 15 22l1 0-3.500 7.800A15 15 0 0 1 2 7.500z" fill="#229a4b"/><path d="M2 7.500A15 15 0 0 1 28 7.500H15l-6.500 11z" fill="#e33b2e"/><circle cx="15" cy="15" r="7.300" fill="#fff"/><circle cx="15" cy="15" r="5.800" fill="#2a7af0"/></svg></div>
    <div class="app sticky"><svg viewBox="0 0 30 30"><rect x="2" y="2" width="26" height="26" rx="1" fill="#3c3c3c"/><path d="M15 15h12.500L15 27.500z" fill="#fd0"/><path d="M27.500 15.500L15.500 27.500h12z" fill="#333"/></svg><em></em></div>
    <div class="app current"><svg viewBox="-1 -1 30 30"><use href="#app" width="28" height="28"/></svg><em></em></div>
    <div class="app remote"><svg viewBox="0 0 30 30"><path d="M15 1l15-1-1 21-13 1z" fill="#b9aca4"/><path d="M18 4l9-1-1 14-8 1z" fill="#9cd0f0"/><circle cx="8.500" cy="20.500" r="8.500" fill="#1c55a8"/><path d="M2 17l5-4 4 3-2 5-5 2zM9 25l5-3 1 3-4 3z" fill="#3da83c"/><path d="M5 11q2-6 14-4V4l6 4-6 5v-3q-8-1-14 1zM27 11q1 10-10 11v3l-7-5 7-4v3q8-1 10-8z" fill="#f0b43c" stroke="#b87b18" stroke-width=".6"/></svg><em></em></div>
  </div>
  <div class="tray">
    <svg class="chev" viewBox="0 0 14 10"><path d="M1 8.500l6-6.500 6 6.500" fill="none" stroke="#111" stroke-width="1.600"/></svg>
    <span class="ime">中</span>
    <svg class="wifi" viewBox="0 0 20 16" fill="none" stroke="#111" stroke-width="1.500"><path d="M1 6q9-9.500 18 0M4 9q6-6 12 0M7 12q3-3 6 0"/><circle cx="10" cy="14" r="1" fill="#111"/></svg>
    <svg class="vol" viewBox="0 0 21 18" fill="none" stroke="#111" stroke-width="1.400"><path d="M1 6.500h3l5-4.500v14l-5-4.500H1zM12 6q2 3 0 6M15 4q4 5 0 10M17.500 2q5 7 0 14"/></svg>
    <svg class="bat" viewBox="0 0 20 18"><rect x="2" y="5" width="15" height="11" rx="3" fill="none" stroke="#111" stroke-width="1.500"/><rect x="4.500" y="7.500" width="10" height="6" rx="1" fill="#111"/><path d="M18 8.500q2 2 0 4z" fill="#111"/><path d="M3 0L0 7h3l-1 4 5-7H4l1-4z" fill="#111"/></svg>
    <div class="clock"><span>12:04</span><span>2024/4/20</span></div>
    <svg class="bell" viewBox="0 0 16 20"><path d="M8 0q6 0 6 7v5l2 4H0l2-4V7q0-7 6-7zM5 17h6q-1 3-3 3t-3-3z" fill="#0a3f9c"/></svg>
  </div>
  <div class="watermark">CSDN @geniusNMRobot顶级专家</div>
</div>

</body>
</html>
```
FILE: styles.css
```css
* {
  box-sizing: border-box;
}

body {
  margin: 0;
  width: 1920px;
  height: 1080px;
  overflow: hidden;
  background: #efefef;
  color: #000;
  font-family: "Noto Sans", "Noto Sans CJK SC", sans-serif;
  font-size: 15px;
  display: flex;
  flex-direction: column;
}

svg {
  display: block;
  flex: none;
}

.sprite {
  position: absolute;
  width: 0;
  height: 0;
}

.px svg, svg.px {
  shape-rendering: crispEdges;
}

.px svg.smooth {
  shape-rendering: auto;
}

/* title and menu */
.title-bar {
  height: 30px;
  background: #eff4fa;
  border-bottom: 1px solid #a0a0a0;
  display: flex;
  align-items: center;
  padding-left: 3px;
}

.app-icon {
  width: 18px;
  height: 18px;
  margin-top: -2px;
}

.title-text {
  margin: -1px 0 0 6px;
  font-size: 14.4px;
  color: #111;
}

.window-buttons {
  margin: -1px 26px 0 auto;
  display: flex;
  gap: 46.5px;
}

.window-buttons svg {
  width: 12px;
  height: 12px;
}

.menu-bar {
  height: 30px;
  border-top: 1px solid #fff;
  border-bottom: 1px solid #a0a0a0;
  display: flex;
  align-items: center;
  padding-left: 4px;
}

.schem-icon {
  width: 20px;
  height: 20px;
}

.menu-bar .schem-icon {
  margin-top: -1px;
}

.menus {
  display: flex;
  gap: 14px;
  margin: -2px 0 0 8px;
  font-size: 15.35px;
}

.menus u {
  text-underline-offset: 2px;
  text-decoration-skip-ink: none;
}

.mdi-buttons {
  margin: 3px 4px 0 auto;
  display: flex;
  gap: 1px;
}

.mdi-buttons b, .mini, .cascade {
  display: flex;
  align-items: center;
  justify-content: center;
  border: 1px solid;
  border-color: #fff #696969 #696969 #fff;
  box-shadow: inset -1px -1px #a0a0a0;
}

.mdi-buttons b {
  width: 20px;
  height: 20px;
}

.mdi-buttons svg {
  width: 14px;
  height: 14px;
}

/* toolbars */
.toolbar-row {
  height: 31px;
  display: flex;
}

.toolbar {
  height: 31px;
  border: 1px solid;
  border-color: #fff #a0a0a0 #a0a0a0 #fff;
  display: flex;
  align-items: center;
  flex: none;
}

.toolbar i {
  width: 22px;
  height: 24px;
  flex: none;
  display: flex;
  align-items: center;
  justify-content: center;
}

.toolbar i.wide {
  width: 24px;
}

.toolbar i svg {
  width: 16px;
  height: 16px;
}

.toolbar i.pressed {
  border: 1px solid;
  border-color: #a0a0a0 #fff #fff #a0a0a0;
  background: #f6f6f6;
}

.toolbar hr {
  width: 1px;
  height: 24px;
  border: 0;
  margin: 0 4px 0 3px;
  background: #a0a0a0;
}

.drop {
  width: 6px;
  height: 4px;
  margin: 0 5px 0 1px;
}

.t-standard {
  width: 280px;
  padding-left: 10px;
}

.t-main {
  width: 509px;
  margin-left: 48px;
  padding-left: 10px;
}

.t-main .select + hr {
  margin: 0 4px;
}

.t-zoom {
  width: 124px;
  margin-left: 441px;
  padding-left: 10px;
}

.select {
  width: 134px;
  height: 25px;
  flex: none;
  background: #fdfdfd;
  border: 1px solid #ccc;
  border-radius: 2px;
  display: flex;
  align-items: center;
  justify-content: space-between;
  padding: 0 5px 2px 4px;
  font-size: 13px;
}

.select svg {
  width: 10px;
  height: 6px;
}

.second .toolbar {
  padding-bottom: 1px;
}

.t-parts {
  width: 470px;
  padding-left: 10px;
}

.t-sim {
  width: 265px;
  margin-left: 99px;
  padding-left: 10px;
}

.sim-mode {
  display: flex;
  align-items: center;
  gap: 3.5px;
  margin: -5px 0 0 3px;
  font-size: 15.2px;
}

.sim-mode svg {
  width: 14px;
  height: 14px;
}

.t-probe {
  width: 190px;
  padding-left: 10px;
}

.pl {
  fill: none;
  stroke: #4e7d49;
  stroke-width: 1.4;
}

/* workspace */
.workspace {
  height: 695px;
  border-top: 1px solid #696969;
  display: flex;
}

.toolbox {
  width: 198px;
  border-right: 1px solid #696969;
  box-shadow: inset -4px 0 #efefef, inset -5px 0 #fff;
  padding: 3px 0 0 3px;
}

.toolbox::after {
  content: "";
  display: block;
  width: 195px;
  margin: 2px 0 0 -3px;
  border-top: 1px solid #a0a0a0;
}

.toolbox-head {
  display: flex;
  align-items: center;
  height: 25px;
}

.toolbox-head h2 {
  width: 151px;
  height: 25px;
  margin: 0 3px 0 0;
  padding-left: 3px;
  font-size: 16px;
  font-weight: normal;
  line-height: 21px;
  background: linear-gradient(90deg, #bdcbda, #d5e3f1);
}

.mini {
  width: 14px;
  height: 14px;
  flex: none;
}

.toolbox-head .mini {
  margin: -2px 2px 0 0;
}

.mini svg {
  width: 8px;
  height: 8px;
}

.toolbox-body {
  width: 184px;
  height: 631px;
  margin-top: 3px;
  border: 1px solid;
  border-color: #fff #696969 #696969 #fff;
  box-shadow: inset -1px -1px #a0a0a0;
}

.toolbox-tools {
  height: 26px;
  display: flex;
  align-items: flex-end;
  gap: 10px;
  padding-left: 6px;
}

.toolbox-tools svg {
  width: 16px;
  height: 16px;
  margin-bottom: 4px;
}

.toolbox-tools .last {
  margin-left: 24px;
}

.tree {
  margin-left: 1px;
  width: 179px;
  height: 602px;
  border: 1px solid #828790;
  background: #fff;
  padding-top: 2px;
}

.node {
  height: 18px;
  display: flex;
  align-items: center;
  padding-left: 7px;
}

.expander {
  width: 11px;
  height: 11px;
}

.dots {
  width: 4px;
  margin: 0 2px 0 1px;
  border-top: 1px dotted #888;
}

.clip {
  width: 12px;
  height: 14px;
}

.label {
  margin-left: 5px;
  padding: 0 2px;
  height: 18px;
  line-height: 17px;
  font-size: 15.3px;
}

.child {
  padding-left: 31px;
}

.elbow {
  width: 11px;
  height: 10px;
  margin-top: -8px;
  border-left: 1px dotted #888;
  border-bottom: 1px dotted #888;
}

.schem {
  width: 16px;
  height: 16px;
}

.label.active {
  margin-left: 3px;
  background: #efefef;
}

/* tabs shared by both panels */
.tab {
  font-size: 12px;
  border: 1px solid;
  border-color: #696969 #696969 #696969 #fff;
  box-shadow: inset -1px -1px #a0a0a0;
  white-space: nowrap;
  height: 22px;
  line-height: 21px;
  padding: 0 4px;
}

.tab.on {
  height: 24px;
  line-height: 25px;
  border-top-color: transparent;
}

.toolbox-tabs {
  display: flex;
  padding-left: 2px;
}

.toolbox-tabs .on {
  width: 67px;
  padding-left: 5px;
}

.toolbox-tabs .tab:nth-child(2) {
  width: 57px;
}

.toolbox-tabs .cut {
  width: 17px;
  margin-left: 2px;
  padding-left: 3px;
  border-right: 0;
  box-shadow: none;
  overflow: hidden;
}

.spin {
  width: 19px;
  height: 19px;
  margin-top: 3px;
  border: 1px solid #a8a8a8;
  display: flex;
  align-items: center;
  justify-content: center;
}

.spin svg {
  width: 5px;
  height: 8px;
}

.editor {
  width: 1696px;
  border-right: 1px solid #696969;
  display: flex;
  flex-direction: column;
}

.canvas {
  height: 653px;
  margin: 3px 4px 0 4px;
  border-style: solid;
  border-width: 3px 1px 1px 3px;
  border-color: #696969 #fff #e3e3e3 #696969;
  display: flex;
}

/* dot grid, one dot every 9px: columns masked over rows */
.sheet {
  width: 1198px;
  background:
    linear-gradient(90deg, transparent 1px, #fff 1px) 8px 8px / 9px 9px,
    linear-gradient(#000 1px, #fff 1px) 8px 8px / 9px 9px;
  display: flex;
  flex-direction: column;
  overflow: hidden;
}

.ruler-top {
  height: 25px;
  flex: none;
  border-bottom: 1px solid #808080;
  display: flex;
}

.ruler-top span, .ruler-side span {
  font-family: "Liberation Sans", Arial, sans-serif;
  font-size: 12px;
  color: #8a8a8a;
  text-align: center;
}

.ruler-top span {
  width: 120px;
  border-right: 1px solid #808080;
  line-height: 22px;
  padding-right: 5px;
}

.ruler-top .corner {
  width: 25px;
}

.ruler-top .rest {
  width: 70px;
}

.ruler-top .end {
  width: 23px;
  border: 0;
}

.sheet-body {
  flex: 1;
  min-height: 0;
  display: flex;
  justify-content: space-between;
}

.ruler-side {
  width: 25px;
  border-right: 1px solid #808080;
}

.ruler-side.right {
  width: 24px;
  border-right: 0;
  border-left: 1px solid #808080;
}

.ruler-side span {
  display: block;
  height: 120px;
  line-height: 117px;
  padding-left: 2px;
  border-bottom: 1px solid #808080;
}

.ruler-side.right span {
  padding-left: 0;
}

.void {
  flex: 1;
  background: linear-gradient(90deg, #666, #7c7c7c 8px, #ababab 19px);
}

.scroll {
  width: 21px;
  border-left: 1px solid #fff;
  border-right: 1px solid #e3e3e3;
  padding: 20px 0 0 7px;
}

.thumb {
  width: 6px;
  height: 439px;
  background: #858585;
}

.doc-tabs {
  height: 32px;
  display: flex;
  align-items: flex-start;
  justify-content: space-between;
  padding-left: 4px;
  margin-top: 6px;
  border-top: 1px solid #696969;
}

.doc-tab {
  width: 91px;
  height: 28px;
  margin-top: -1px;
  background: #efefef;
  border: 1px solid #000;
  border-width: 0 2px 2px 0;
  border-radius: 0 0 3px 3px;
  display: flex;
  align-items: center;
  gap: 4px;
  padding: 2px 0 0 3px;
  font-size: 15.3px;
}

.cascade {
  width: 15px;
  height: 16px;
  margin: 6px 2px 0 0;
}

.cascade svg {
  width: 12px;
  height: 12px;
}

.instruments {
  width: 26px;
  height: 505px;
  border-top: 1px solid #a0a0a0;
  border-bottom: 1px solid #a0a0a0;
  border-right: 1px solid #a0a0a0;
  display: flex;
  flex-direction: column;
  align-items: center;
  padding: 14px 1px 0 0;
}

.instruments svg {
  width: 16px;
  height: 16px;
}

.inst-list {
  display: grid;
  gap: 5px;
}

.instruments hr {
  width: 21px;
  height: 2px;
  margin: 4px 0 6px;
  border: 0;
  border-top: 1px solid #a0a0a0;
  background: #fff;
}

.instruments .more {
  width: 4px;
  height: 6px;
  margin: 4px 0;
}

.instruments .off {
  fill: #999;
  margin: 3px 0;
}

/* bottom panel */
.spreadsheet {
  height: 180px;
  border-top: 1px solid #696969;
  border-bottom: 1px solid #a0a0a0;
  display: flex;
}

.side {
  width: 30px;
  padding-top: 2px;
  display: flex;
  flex-direction: column;
  gap: 2px;
}

.side .mini {
  margin-left: 7px;
}

.side-title {
  width: 25px;
  height: 138px;
  margin: 1px 0 0 2px;
  padding: 2px 0 0 1px;
  background: linear-gradient(#d5e3f1, #bdcbda);
}

.side-title span {
  display: block;
  writing-mode: vertical-rl;
  transform: rotate(180deg);
  height: 133px;
  line-height: 18px;
  font-family: "Liberation Mono", monospace;
  font-size: 13.3px;
  white-space: nowrap;
  width: 18px;
}

.results {
  width: 1885px;
  padding-top: 6px;
}

.log {
  height: 143px;
  border: 1px solid;
  border-color: #fff #696969 #696969 #fff;
  box-shadow: inset -1px -1px #a0a0a0;
}

.log-box {
  width: 1880px;
  height: 140px;
  margin-left: 1px;
  border: 1px solid #828790;
  background: #fff;
  padding: 3px 0 0 23px;
  line-height: 20px;
  font-size: 15.5px;
}

.result-tabs {
  display: flex;
  padding-left: 2px;
}

.result-tabs .tab {
  margin-right: 2px;
}

.result-tabs .on {
  width: 54px;
  padding-left: 5px;
  margin-right: 0;
}

.result-tabs .tab:nth-child(2) {
  width: 47px;
  margin-right: 1px;
}

.result-tabs .tab:nth-child(3) {
  width: 81px;
}

.result-tabs .tab:nth-child(4) {
  width: 89px;
}

.result-tabs .tab:nth-child(5) {
  width: 71px;
}

.status-bar {
  height: 23px;
  border-top: 1px solid #fff;
  display: flex;
  padding: 2px 0 1px;
  font-size: 14px;
  line-height: 20px;
}

.status-bar > span {
  border-right: 1px solid #d0d0d0;
}

.s1 {
  width: 1490px;
  padding-left: 1342px;
}

.s2 {
  width: 183px;
}

.s3 {
  width: 183px;
  padding-left: 5px;
}

.status-bar .leds {
  border: 0;
  display: flex;
  gap: 2px;
  padding: 3px 0 0 4px;
}

.leds i {
  width: 6px;
  height: 14px;
  border: 1px solid;
  border-color: #888 #e0e0e0 #e0e0e0 #888;
}

/* taskbar */
.taskbar {
  position: relative;
  height: 60px;
  border-top: 1px solid #a8b4ba;
  background: linear-gradient(90deg, #d8eff5 0, #d6f0f3 25%, #c6f1e9 50%, #c6f3e6 68%, #c7f2f2 78%, #c7f2f3);
  display: flex;
  justify-content: space-between;
}

.apps {
  display: flex;
  padding: 4px 0 0 16px;
  gap: 5.2px;
}

.app {
  width: 50px;
  height: 50px;
  border-radius: 4px;
  display: flex;
  flex-direction: column;
  align-items: center;
  padding-top: 10px;
}

.app svg {
  width: 30px;
  height: 30px;
}

.app em {
  width: 8px;
  height: 4px;
  margin-top: 5px;
  border-radius: 2px;
  background: #7d868a;
}

.sticky {
  background: #fde5e7;
}

.sticky em {
  background: #c42b1c;
}

.current {
  background: #eef9fc;
}

.current em {
  width: 20px;
  background: #0078d4;
}

.pro {
  font: bold 6.5px "Liberation Sans", sans-serif;
  fill: #fff;
}

.tray {
  display: flex;
  align-items: center;
  padding: 0 27px 1px 0;
}

.chev {
  width: 14px;
  height: 10px;
}

.ime {
  margin-left: 23px;
  font-size: 18px;
  line-height: 20px;
}

.wifi {
  width: 20px;
  height: 16px;
  margin-left: 22px;
}

.vol {
  width: 21px;
  height: 18px;
  margin-left: 10px;
}

.bat {
  width: 20px;
  height: 18px;
  margin-left: 9px;
}

.clock {
  width: 90px;
  display: flex;
  flex-direction: column;
  text-align: right;
  font-size: 14px;
  line-height: 20px;
}

.bell {
  width: 16px;
  height: 20px;
  margin-left: 11px;
}

.watermark {
  position: absolute;
  left: 1616px;
  top: 25px;
  font-family: "Liberation Sans", "Noto Sans CJK SC", sans-serif;
  font-size: 18.8px;
  line-height: 28px;
  white-space: nowrap;
  color: rgba(255, 255, 255, 0.75);
  text-shadow: 1px 1px 1px rgba(60, 60, 60, 0.8);
}
```
